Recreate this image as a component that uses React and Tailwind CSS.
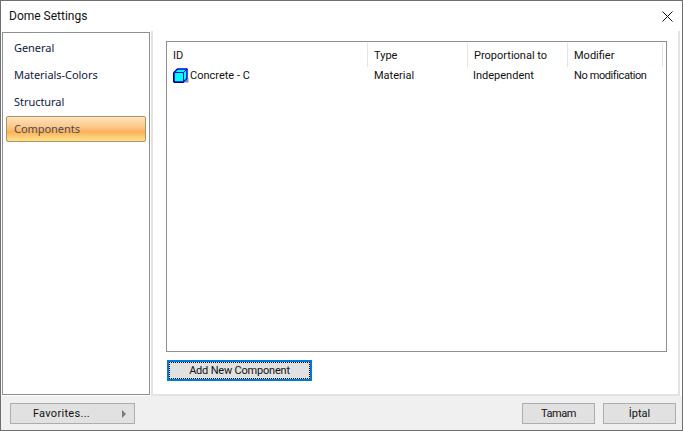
import React from "react";

const columns = [
  { label: "ID", width: "w-[201px]" },
  { label: "Type", width: "w-[100px]" },
  { label: "Proportional to", width: "w-[100px]" },
  { label: "Modifier", width: "w-[95px]" },
];

const NavItem = ({ label, active = false }) => (
  <div
    className={`flex items-center pl-[7px] rounded-[2px] ${
      active
        ? "h-[26px] -mt-[1px] border border-[#ad9468] bg-[linear-gradient(#fde3bd_0%,#fcc98a_40%,#fbb05a_62%,#fdd27a_85%,#fee08c_100%)] text-[#4c4c5c]"
        : "h-[25px] border border-transparent text-[#10203c]"
    }`}
  >
    {label}
  </div>
);

// kup ikonu
const CubeIcon = () => (
  <svg width="16" height="15" viewBox="0 0 16 15" className="shrink-0 -mt-[2px]">
    <path d="M1 4.5 L4.5 1 H14 V10.5 L10.5 14 H1 Z" fill="#00ffff" stroke="#0000e0" strokeWidth="1.5" strokeLinejoin="round" />
    <path d="M1.5 4.5 H10.5 V13.5 M10.5 4.5 L13.5 1.5" fill="none" stroke="#0000e0" />
    <path d="M1 14.5 H10.5" stroke="#000050" />
    <path d="M0.5 5 V14" stroke="#000050" />
    <path d="M15.5 10 V14.5 H11 Z" fill="#8a8a8a" />
  </svg>
);

const Button = ({ children, className = "" }) => (
  <button className={`h-[21px] pt-[2px] bg-[#e1e1e1] border border-[#adadad] flex items-center justify-center text-[#111] ${className}`}>
    {children}
  </button>
);

export default function App() {
  return (
    <div className="w-[683px] h-[431px] flex flex-col border border-[#6f6f6f] bg-white overflow-hidden text-[11px] text-black [font-family:Roboto,sans-serif]">
      {/* titulo */}
      <div className="h-[30px] shrink-0 flex items-center justify-between pl-[8px] pr-[9px]">
        <span className="text-[12px] text-[#111]">Dome Settings</span>
        <svg width="11" height="11" viewBox="0 0 11 11">
          <path d="M0.5 0.5 L10.5 10.5 M10.5 0.5 L0.5 10.5" stroke="#111" fill="none" />
        </svg>
      </div>

      {/* cuerpo */}
      <div className="flex-1 flex min-h-0 pl-[1px] pr-[2px]">
        <div className="w-[148px] shrink-0 border border-[#8c9094] mt-[1px] mb-[1px] p-[3px] flex flex-col gap-[2px] [font-family:'Noto_Sans',sans-serif] tracking-[-0.05px]">
          <NavItem label="General" />
          <NavItem label="Materials-Colors" />
          <NavItem label="Structural" />
          <NavItem label="Components" active />
        </div>
        <div className="flex-1 border-l-2 border-r-2 border-b-2 border-[#e3e3e3] ml-[1px] pl-[13px] pr-[11px] pt-[10px] flex flex-col">
          <div className="h-[311px] border border-[#8c9094] flex flex-col">
            <div className="flex h-[25px] pt-[1px]">
              {columns.map((c) => (
                <div key={c.label} className={`${c.width} h-[24px] pl-[6px] pt-[2px] flex items-center border-r border-[#e5e5e5] text-[#111]`}>
                  {c.label}
                </div>
              ))}
            </div>
            <div className="flex h-[19px] items-center text-[#111]">
              <div className="w-[201px] pl-[6px] flex items-center gap-[1px]">
                <CubeIcon />
                Concrete - C
              </div>
              <div className="w-[100px] pl-[6px]">Material</div>
              <div className="w-[100px] pl-[5px]">Independent</div>
              <div className="w-[95px] pl-[6px] tracking-[-0.4px]">No modification</div>
            </div>
          </div>
          <button className="mt-[8px] ml-[1px] w-[145px] h-[21px] pt-[2px] bg-[#e1e1e1] border-2 border-[#0078d7] outline-1 outline-dotted -outline-offset-3 outline-black flex items-center justify-center text-[#111] tracking-[-0.2px]">
            Add New Component
          </button>
        </div>
      </div>

      {/* pie */}
      <div className="h-[34px] shrink-0 bg-[#f0f0f0] flex items-center justify-between pt-[1px] pl-[9px] pr-[6px]">
        <Button className="w-[125px] relative">
          <span className="mr-[22px] tracking-[0.3px]">Favorites...</span>
          <span className="absolute right-[8px] top-[6px] border-y-[4px] border-y-transparent border-l-[4px] border-l-[#7a7a7a]" />
        </Button>
        <div className="flex gap-[8px]">
          <Button className="w-[73px] tracking-[-0.4px]">Tamam</Button>
          <Button className="w-[73px]">İptal</Button>
        </div>
      </div>
    </div>
  );
}
